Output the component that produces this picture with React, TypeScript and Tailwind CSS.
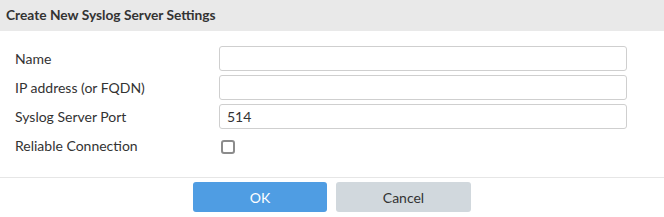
import React from 'react'

const Row = ({ label, value }: { label: string; value?: string }) => (
    <div className="flex items-center h-[25px]">
        <label className="w-[219px] pl-[15px] text-[14px] text-[#333]">{label}</label>
        <input
            type="text"
            defaultValue={value}
            className="w-[408px] h-[25px] border border-[#cfcfcf] rounded-[3px] px-[7px] text-[14px] text-[#333] outline-none"
        />
    </div>
)

const App = () => {
    return (
        <div className="w-[664px] h-[217px] bg-white font-['Lato',sans-serif] text-[#333]">
            <div className="h-[31px] bg-[#e9e9e9] flex items-center pl-[6px]">
                <span className="text-[13.75px] font-bold text-[#333]">Create New Syslog Server Settings</span>
            </div>
            <div className="pt-[15px] flex flex-col gap-[4px]">
                <Row label="Name" />
                <Row label="IP address (or FQDN)" />
                <Row label="Syslog Server Port" value="514" />
                <div className="flex items-center h-[25px]">
                    <label className="w-[219px] pl-[15px] text-[14px]">Reliable Connection</label>
                    <div className="ml-[2px] mt-[2px] w-[14px] h-[14px] border-2 border-[#8c8c8c] rounded-[3px]" />
                </div>
            </div>
            <div className="mt-[19px] border-t border-[#e6e6e6] pt-[4px] flex justify-center gap-[9px]">
                <button className="w-[134px] h-[30px] bg-[#4f9de3] text-white text-[14px] rounded-[3px]">OK</button>
                <button className="w-[135px] h-[30px] bg-[#d1d8dd] text-[#333] text-[14px] rounded-[3px]">Cancel</button>
            </div>
        </div>
    )
}

export default App
